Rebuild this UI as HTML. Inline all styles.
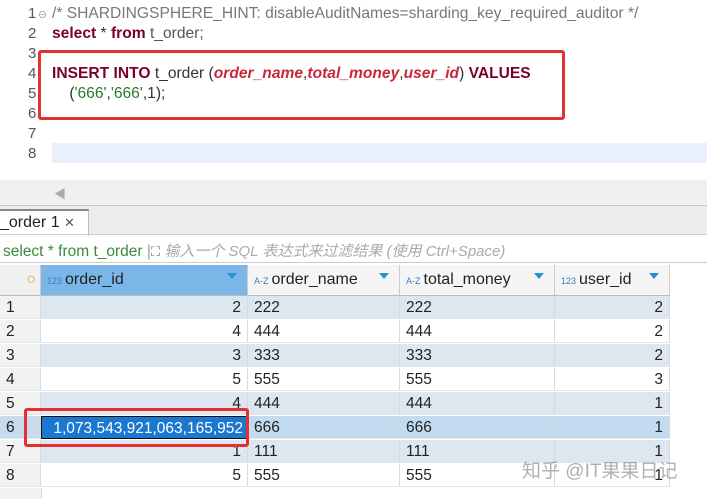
<!DOCTYPE html><html><head><meta charset="utf-8"><style>
body{margin:0;width:707px;height:499px;overflow:hidden;background:#fff;font-family:"Liberation Sans","Noto Sans CJK SC",sans-serif;position:relative}
.a{position:absolute}
.ln{position:absolute;left:28px;width:12px;font-size:15px;color:#555;text-align:left}
.code{position:absolute;left:52px;font-size:15.6px;white-space:pre;color:#333}
.kw{color:#7a0026;font-weight:bold}
.it{color:#c8283c;font-style:italic;font-weight:bold}
.str{color:#2a7a2a}
.row{position:absolute;left:0;width:707px;height:24px;font-size:15.5px;color:#222}
.c{position:absolute;top:0;height:23px;line-height:23px;border-right:1px solid #d8d8d8;border-bottom:1px solid #e4e4e4;box-sizing:border-box;padding:0 6px}
.r{text-align:right}
.hd{position:absolute;top:265px;height:31px;line-height:30px;font-size:16px;color:#222;box-sizing:border-box;border-right:1px solid #ccc;border-bottom:1px solid #bbb;padding-left:6px;background:#f5f5f5}
.ic{font-size:9px;color:#3a7cc0;margin-right:3px}
.tri{position:absolute;right:10px;top:8px;width:0;height:0;border-left:5px solid transparent;border-right:5px solid transparent;border-top:6px solid #2a8fd0}
</style></head><body>
<div class="a" style="left:52px;top:143px;width:655px;height:20px;background:#e8f0fb"></div>
<div class="ln" style="top:5px">1</div><div class="ln" style="top:25px">2</div><div class="ln" style="top:45px">3</div><div class="ln" style="top:65px">4</div><div class="ln" style="top:85px">5</div><div class="ln" style="top:105px">6</div><div class="ln" style="top:125px">7</div><div class="ln" style="top:145px">8</div>
<div class="a" style="left:38px;top:8px;font-size:9px;color:#888">⊖</div>
<div class="code" style="top:5px;color:#777">/* SHARDINGSPHERE_HINT: disableAuditNames=sharding_key_required_auditor */</div>
<div class="code" style="top:25px"><span class="kw">select</span> * <span class="kw">from</span> <span style="color:#555">t_order;</span></div>
<div class="code" style="top:65px"><span class="kw">INSERT INTO</span> t_order (<span class="it">order_name</span>,<span class="it">total_money</span>,<span class="it">user_id</span>) <span class="kw">VALUES</span></div>
<div class="code" style="top:85px">    (<span class="str">'666'</span>,<span class="str">'666'</span>,1);</div>
<div class="a" style="left:38px;top:50px;width:521px;height:64px;border:3px solid #e53030;border-radius:3px"></div>
<div class="a" style="left:0;top:180px;width:707px;height:25px;background:#f0f0f0"></div>
<div class="a" style="left:54px;top:185px;color:#aaa;font-size:12px">◀</div>
<div class="a" style="left:0;top:205px;width:707px;height:1px;background:#c8c8c8"></div>
<div class="a" style="left:0;top:206px;width:707px;height:28px;background:#ececec"></div>
<div class="a" style="left:0;top:209px;width:88px;height:25px;background:#fff;border-right:1px solid #bbb;border-top:2px solid #888;font-size:16px;line-height:24px;color:#222">_order 1 <span style="font-size:13px;color:#555">✕</span></div>
<div class="a" style="left:0;top:234px;width:707px;height:1px;background:#ccc"></div>
<div class="a" style="left:3px;top:240px;font-size:15.5px;color:#3a8a3a;white-space:nowrap">select * from t_order <span style="color:#999">|</span><span style="color:#777;font-size:13px">⛶</span> <span style="color:#aaa;font-style:italic;font-size:15px">输入一个 SQL 表达式来过滤结果 (使用 Ctrl+Space)</span></div>
<div class="a" style="left:0;top:262px;width:707px;height:1px;background:#ccc"></div>
<div class="hd" style="left:0;width:41px;text-align:right;padding-right:4px;color:#e0a030;background:#f0f0f0">○</div>
<div class="hd" style="left:41px;width:207px;background:#7ab7e8"><span class="ic">123</span>order_id<span class="tri"></span></div>
<div class="hd" style="left:248px;width:152px"><span class="ic">A-Z</span>order_name<span class="tri"></span></div>
<div class="hd" style="left:400px;width:155px"><span class="ic">A-Z</span>total_money<span class="tri"></span></div>
<div class="hd" style="left:555px;width:115px"><span class="ic">123</span>user_id<span class="tri"></span></div>
<div class="row" style="top:296px"><div class="c" style="left:0;width:41px;background:#f2f2f2">1</div><div class="c r" style="left:41px;width:207px;background:#dce7f2">2</div><div class="c" style="left:248px;width:152px;background:#dce7f2">222</div><div class="c" style="left:400px;width:155px;background:#dce7f2">222</div><div class="c r" style="left:555px;width:115px;background:#dce7f2">2</div></div>
<div class="row" style="top:320px"><div class="c" style="left:0;width:41px;background:#f2f2f2">2</div><div class="c r" style="left:41px;width:207px">4</div><div class="c" style="left:248px;width:152px">444</div><div class="c" style="left:400px;width:155px">444</div><div class="c r" style="left:555px;width:115px">2</div></div>
<div class="row" style="top:344px"><div class="c" style="left:0;width:41px;background:#f2f2f2">3</div><div class="c r" style="left:41px;width:207px;background:#dce7f2">3</div><div class="c" style="left:248px;width:152px;background:#dce7f2">333</div><div class="c" style="left:400px;width:155px;background:#dce7f2">333</div><div class="c r" style="left:555px;width:115px;background:#dce7f2">2</div></div>
<div class="row" style="top:368px"><div class="c" style="left:0;width:41px;background:#f2f2f2">4</div><div class="c r" style="left:41px;width:207px">5</div><div class="c" style="left:248px;width:152px">555</div><div class="c" style="left:400px;width:155px">555</div><div class="c r" style="left:555px;width:115px">3</div></div>
<div class="row" style="top:392px"><div class="c" style="left:0;width:41px;background:#f2f2f2">5</div><div class="c r" style="left:41px;width:207px;background:#dce7f2">4</div><div class="c" style="left:248px;width:152px;background:#dce7f2">444</div><div class="c" style="left:400px;width:155px;background:#dce7f2">444</div><div class="c r" style="left:555px;width:115px;background:#dce7f2">1</div></div>
<div class="row" style="top:416px"><div class="c" style="left:0;width:41px;background:#c8dcee">6</div><div class="c r" style="left:41px;width:207px;background:#1a78d0;color:#fff;border:1px solid #111;padding:0 4px">1,073,543,921,063,165,952</div><div class="c" style="left:248px;width:152px;background:#c3dbf1">666</div><div class="c" style="left:400px;width:155px;background:#c3dbf1">666</div><div class="c r" style="left:555px;width:115px;background:#c3dbf1">1</div></div>
<div class="row" style="top:440px"><div class="c" style="left:0;width:41px;background:#f2f2f2">7</div><div class="c r" style="left:41px;width:207px;background:#dce7f2">1</div><div class="c" style="left:248px;width:152px;background:#dce7f2">111</div><div class="c" style="left:400px;width:155px;background:#dce7f2">111</div><div class="c r" style="left:555px;width:115px;background:#dce7f2">1</div></div>
<div class="row" style="top:464px"><div class="c" style="left:0;width:41px;background:#f2f2f2">8</div><div class="c r" style="left:41px;width:207px">5</div><div class="c" style="left:248px;width:152px">555</div><div class="c" style="left:400px;width:155px">555</div><div class="c r" style="left:555px;width:115px">1</div></div>
<div class="a" style="left:0;top:488px;width:41px;height:11px;background:#f2f2f2;border-right:1px solid #d8d8d8"></div>
<div class="a" style="left:24px;top:408px;width:219px;height:33px;border:3px solid #e53030;border-radius:3px"></div>
<div class="a" style="left:522px;top:456px;font-size:19px;color:rgba(150,150,150,0.75);white-space:nowrap">知乎 @IT果果日记</div>
</body></html>
